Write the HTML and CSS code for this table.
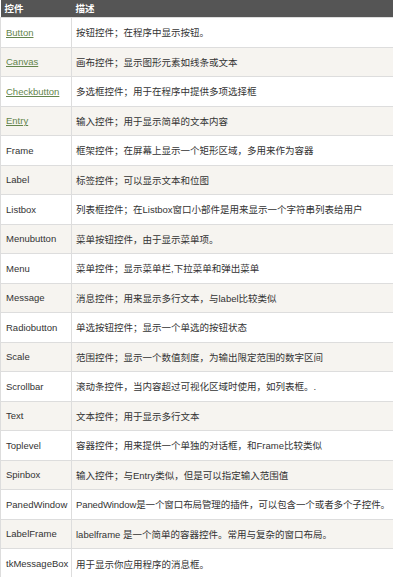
FILE: index.html
```html
<!DOCTYPE html>
<html>
<head>
<meta charset="utf-8">
<link rel="stylesheet" href="styles.css">
</head>
<body>
<table class="ref">
  <thead>
    <tr class="head"><th class="c1">控件</th><th class="c2">描述</th></tr>
  </thead>
  <tbody>
    <tr><td><a class="lnk" href="#">Button</a></td><td>按钮控件；在程序中显示按钮。</td></tr>
    <tr><td><a class="lnk" href="#">Canvas</a></td><td>画布控件；显示图形元素如线条或文本</td></tr>
    <tr><td><a class="lnk" href="#">Checkbutton</a></td><td>多选框控件；用于在程序中提供多项选择框</td></tr>
    <tr><td><a class="lnk" href="#">Entry</a></td><td>输入控件；用于显示简单的文本内容</td></tr>
    <tr><td>Frame</td><td>框架控件；在屏幕上显示一个矩形区域，多用来作为容器</td></tr>
    <tr><td>Label</td><td>标签控件；可以显示文本和位图</td></tr>
    <tr><td>Listbox</td><td>列表框控件；在Listbox窗口小部件是用来显示一个字符串列表给用户</td></tr>
    <tr><td>Menubutton</td><td>菜单按钮控件，由于显示菜单项。</td></tr>
    <tr><td>Menu</td><td>菜单控件；显示菜单栏,下拉菜单和弹出菜单</td></tr>
    <tr><td>Message</td><td>消息控件；用来显示多行文本，与label比较类似</td></tr>
    <tr><td>Radiobutton</td><td>单选按钮控件；显示一个单选的按钮状态</td></tr>
    <tr><td>Scale</td><td>范围控件；显示一个数值刻度，为输出限定范围的数字区间</td></tr>
    <tr><td>Scrollbar</td><td>滚动条控件，当内容超过可视化区域时使用，如列表框。.</td></tr>
    <tr><td>Text</td><td>文本控件；用于显示多行文本</td></tr>
    <tr><td>Toplevel</td><td>容器控件；用来提供一个单独的对话框，和Frame比较类似</td></tr>
    <tr><td>Spinbox</td><td>输入控件；与Entry类似，但是可以指定输入范围值</td></tr>
    <tr><td>PanedWindow</td><td class="tight">PanedWindow是一个窗口布局管理的插件，可以包含一个或者多个子控件。</td></tr>
    <tr><td>LabelFrame</td><td>labelframe 是一个简单的容器控件。常用与复杂的窗口布局。</td></tr>
    <tr><td>tkMessageBox</td><td>用于显示你应用程序的消息框。</td></tr>
  </tbody>
</table>
</body>
</html>
```
FILE: styles.css
```css
html, body {
  margin: 0;
  padding: 0;
  background: #fff;
}
body {
  font-family: "Liberation Sans", "Noto Sans CJK SC", sans-serif;
  font-size: 9.5px;
  color: #333;
}
.ref {
  border-collapse: collapse;
  width: 395px;
  table-layout: fixed;
}
.ref .c1 {
  width: 67px;
}
.head {
  background: #555;
  height: 17px;
}
.head th {
  color: #fff;
  font-weight: bold;
  text-align: left;
  padding: 0 0 0 4px;
  line-height: 17px;
  white-space: nowrap;
}
.ref tbody tr {
  height: 29.5px;
}
.ref tbody tr:nth-child(even) {
  background: #f6f4f0;
}
.ref td {
  border-top: 1px solid #ddd;
  border-left: 1px solid #ddd;
  padding: 0 0 0 5px;
  white-space: nowrap;
  vertical-align: middle;
}
.ref td + td {
  padding-left: 4px;
}
.ref td.tight {
  letter-spacing: -0.1px;
}
.lnk {
  color: #64854c;
  text-decoration: underline;
}
```
